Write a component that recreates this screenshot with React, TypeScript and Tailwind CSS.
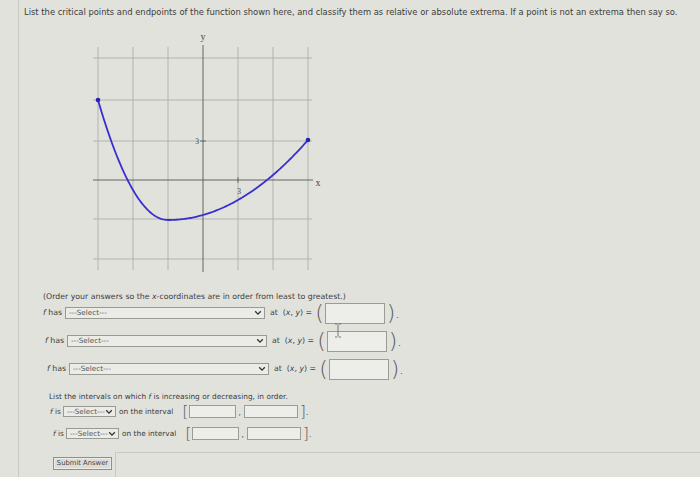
import React from "react";

// graph is drawn in page coordinates via the viewBox offset
const ox = 203;
const oy = 180;
const sx = 35 / 3;
const sy = 40 / 3;
const f = (x: number) => (x < -3 ? (x + 3) ** 2 / 4 - 3 : (x + 3) ** 2 / 24 - 3);
const curve = Array.from({ length: 181 }, (_, i) => {
  const x = -9 + i * 0.1;
  return `${(ox + x * sx).toFixed(2)},${(oy - f(x) * sy).toFixed(2)}`;
}).join(" ");

const gridX = [98, 133, 168, 238, 273, 308];
const gridY = [58, 100, 141, 219, 259];

function Graph() {
  return (
    <svg
      className="ml-[66px] mt-[11px] block shrink-0"
      width="245"
      height="250"
      viewBox="85 28 245 250"
    >
      {gridX.map((x) => (
        <line key={x} x1={x} y1={47} x2={x} y2={270} stroke="#a9a9a4" strokeWidth="0.8" />
      ))}
      {gridY.map((y) => (
        <line key={y} x1={93} y1={y} x2={312} y2={y} stroke="#a9a9a4" strokeWidth="0.8" />
      ))}
      <line x1={93} y1={180} x2={313} y2={180} stroke="#555" strokeWidth="0.9" />
      <line x1={203} y1={45} x2={203} y2={272} stroke="#555" strokeWidth="0.9" />
      <line x1={200} y1={141} x2={206} y2={141} stroke="#555" strokeWidth="0.8" />
      <line x1={238} y1={177} x2={238} y2={183} stroke="#555" strokeWidth="0.8" />
      <text x={203} y={40} fontSize="10" textAnchor="middle" fill="#444" fontFamily="'Liberation Serif', serif">y</text>
      <text x={318} y={186} fontSize="10" textAnchor="middle" fill="#444" fontFamily="'Liberation Serif', serif">x</text>
      <text x={199} y={144} fontSize="7.5" textAnchor="end" fill="#444" fontFamily="'Liberation Serif', serif">3</text>
      <text x={239} y={194} fontSize="7.5" textAnchor="middle" fill="#444" fontFamily="'Liberation Serif', serif">3</text>
      <polyline points={curve} fill="none" stroke="#3a2fd2" strokeWidth="1.8" strokeLinejoin="round" />
      <circle cx={98} cy={100} r={2.3} fill="#2a20b6" />
      <circle cx={308} cy={140} r={2.3} fill="#2a20b6" />
    </svg>
  );
}

function SelectBox({ className, label }: { className: string; label: string }) {
  return (
    <div
      className={`flex items-center justify-between border border-[#9a9a95] bg-[#ebebe7] pl-[3px] pr-[2px] ${className}`}
    >
      <span className="text-[7.2px] leading-none text-[#555]">{label}</span>
      <svg width="8" height="6" viewBox="0 0 8 6">
        <path d="M1.2 1.3l2.8 2.8 2.8-2.8" fill="none" stroke="#333" strokeWidth="1.3" />
      </svg>
    </div>
  );
}

function PointRow({ indent }: { indent: string }) {
  return (
    <div className={`flex h-[22px] shrink-0 items-center text-[7.8px] ${indent}`}>
      <span className="w-[22px]">
        <i>f</i> has
      </span>
      <SelectBox className="h-[12px] w-[200px]" label="---Select---" />
      <span className="ml-[5px] whitespace-pre">
        at  (<i>x</i>, <i>y</i>) =
      </span>
      <span className="ml-[3px] text-[22px] font-extralight leading-none text-[#5a5a5a]">(</span>
      <input
        readOnly
        className="ml-[1px] h-[21px] w-[60px] border border-[#9c9c97] bg-[#ededea]"
      />
      <span className="ml-[2px] text-[22px] font-extralight leading-none text-[#5a5a5a]">)</span>
      <span className="ml-[1px] self-end pb-[2px]">.</span>
    </div>
  );
}

function IntervalRow({ indent }: { indent: string }) {
  return (
    <div className={`flex h-[13px] shrink-0 items-center text-[7.4px] ${indent}`}>
      <span className="w-[13px]">
        <i>f</i> is
      </span>
      <SelectBox className="h-[11px] w-[53px]" label="---Select---" />
      <span className="ml-[3px]">on the interval</span>
      <span className="ml-[9px] text-[16px] font-extralight leading-none text-[#5a5a5a]">[</span>
      <input readOnly className="ml-[1px] h-[13px] w-[47px] border border-[#9c9c97] bg-[#ededea]" />
      <span className="ml-[2px] self-end">,</span>
      <input readOnly className="ml-[3px] h-[13px] w-[54px] border border-[#9c9c97] bg-[#ededea]" />
      <span className="ml-[2px] text-[16px] font-extralight leading-none text-[#5a5a5a]">]</span>
      <span className="self-end">.</span>
    </div>
  );
}

export default function App() {
  return (
    <div className="relative h-[477px] w-[700px] overflow-hidden bg-[#e2e2dc] font-['DejaVu_Sans',Verdana,sans-serif] text-[#3b3b3b]">
      <div className="ml-[18px] flex h-full flex-col border-l border-[#c9c9c3]">
        <p className="shrink-0 whitespace-nowrap pl-[5px] pt-[7px] text-[8.4px] leading-[10px]">
          List the critical points and endpoints of the function shown here, and classify them as
          relative or absolute extrema. If a point is not an extrema then say so.
        </p>

        <Graph />

        <p className="mt-[14px] shrink-0 pl-[24px] text-[7.8px] leading-[10px]">
          (Order your answers so the <i>x</i>-coordinates are in order from least to greatest.)
        </p>

        <div className="flex shrink-0 flex-col gap-[6px]">
          <PointRow indent="pl-[24px]" />
          <PointRow indent="pl-[26px]" />
          <PointRow indent="pl-[28px]" />
        </div>

        <p className="mt-[12px] shrink-0 pl-[30px] text-[7.4px] leading-[10px]">
          List the intervals on which <i>f</i> is increasing or decreasing, in order.
        </p>
        <div className="mt-[3px] flex shrink-0 flex-col gap-[9px]">
          <IntervalRow indent="pl-[31px]" />
          <IntervalRow indent="pl-[34px]" />
        </div>

        <div className="mt-[12px] flex flex-1">
          <div className="flex w-[96px] items-start pl-[34px] pt-[5px]">
            <button className="h-[13px] w-[59px] border border-[#8e8e8a] bg-[#dcdcd7] text-[6.8px] leading-none text-[#444] shadow-[inset_0_0_0_1px_#ecece8]">
              Submit Answer
            </button>
          </div>
          <div className="flex-1 border-l border-t border-[#c9c9c3]" />
        </div>
      </div>

      {/* mouse cursor over the second input */}
      <svg className="absolute left-[334px] top-[323px]" width="8" height="15" viewBox="0 0 8 15">
        <path d="M1 1h2.2M4.8 1H7M4 1.5v12M1 14h2.2M4.8 14H7" fill="none" stroke="#666" strokeWidth="0.9" />
      </svg>
    </div>
  );
}
